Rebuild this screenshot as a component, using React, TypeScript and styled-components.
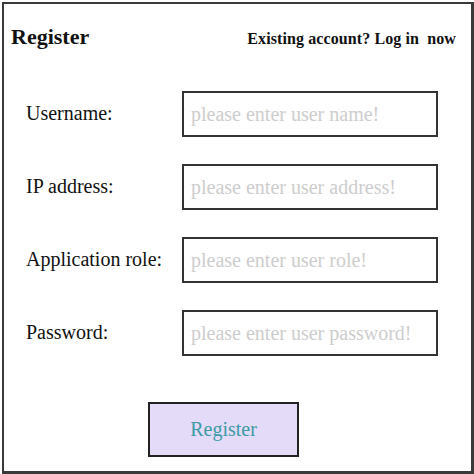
import styled, { createGlobalStyle } from 'styled-components';

const GlobalStyle = createGlobalStyle`
	html, body {
		margin: 0;
		padding: 0;
		background: #ffffff;
	}
	body {
		font-family: "Liberation Serif", "Times New Roman", serif;
		color: #111111;
	}
	input, button {
		font-family: "Liberation Serif", "Times New Roman", serif;
	}
	#root {
		padding: 2px 0 0 2px;
	}
`;

interface IField {
	label: string;
	placeholder: string;
}

const fields: IField[] = [
	{ label: 'Username:', placeholder: 'please enter user name!' },
	{ label: 'IP address:', placeholder: 'please enter user address!' },
	{ label: 'Application role:', placeholder: 'please enter user role!' },
	{ label: 'Password:', placeholder: 'please enter user password!' },
];

const App = (): JSX.Element => {
	return (
		<>
			<GlobalStyle />
			<Frame>
				<Header>
					<Title>Register</Title>
					<LoginLink>Existing account? Log in&nbsp;&nbsp;now</LoginLink>
				</Header>
				<Form>
					{fields.map((f) => (
						<Row key={f.label}>
							<Label>{f.label}</Label>
							<Input type="text" placeholder={f.placeholder} />
						</Row>
					))}
				</Form>
				<SubmitButton type="button">Register</SubmitButton>
			</Frame>
		</>
	);
};

export default App;

const Frame = styled.div`
	box-sizing: border-box;
	width: 472px;
	height: 472px;
	border-style: solid;
	border-color: #3a3a3a;
	border-width: 2px 3px 3px 2px;
	display: flex;
	flex-direction: column;
`;

const Header = styled.div`
	display: flex;
	flex-direction: row;
	align-items: baseline;
	justify-content: space-between;
	margin-top: 22px;
	padding: 0 15px 0 7px;
`;

const Title = styled.h1`
	margin: 0;
	font-size: 22px;
	line-height: 22px;
	font-weight: bold;
`;

const LoginLink = styled.span`
	font-size: 16px;
	font-weight: bold;
	line-height: 16px;
	letter-spacing: 0.1px;
	cursor: pointer;
`;

const Form = styled.div`
	display: flex;
	flex-direction: column;
	gap: 27px;
	margin-top: 43px;
	padding-left: 22px;
`;

const Row = styled.div`
	display: flex;
	flex-direction: row;
	align-items: center;
	height: 46px;
`;

const Label = styled.label`
	width: 156px;
	font-size: 20px;
	line-height: 20px;
	color: #111111;
	margin-top: -2px;
`;

const Input = styled.input`
	box-sizing: border-box;
	width: 256px;
	height: 46px;
	border: 2px solid #333333;
	border-radius: 0;
	padding: 0 0 0 7px;
	font-size: 20px;
	color: #222222;
	background: #ffffff;
	outline: none;

	&::placeholder {
		color: #cdcdcd;
		opacity: 1;
	}
`;

const SubmitButton = styled.button`
	box-sizing: border-box;
	align-self: flex-start;
	margin: 46px 0 0 144px;
	width: 151px;
	height: 55px;
	border: 2px solid #222222;
	border-radius: 0;
	background: #e3dbf8;
	color: #3d9aa6;
	font-size: 20px;
	cursor: pointer;
`;
